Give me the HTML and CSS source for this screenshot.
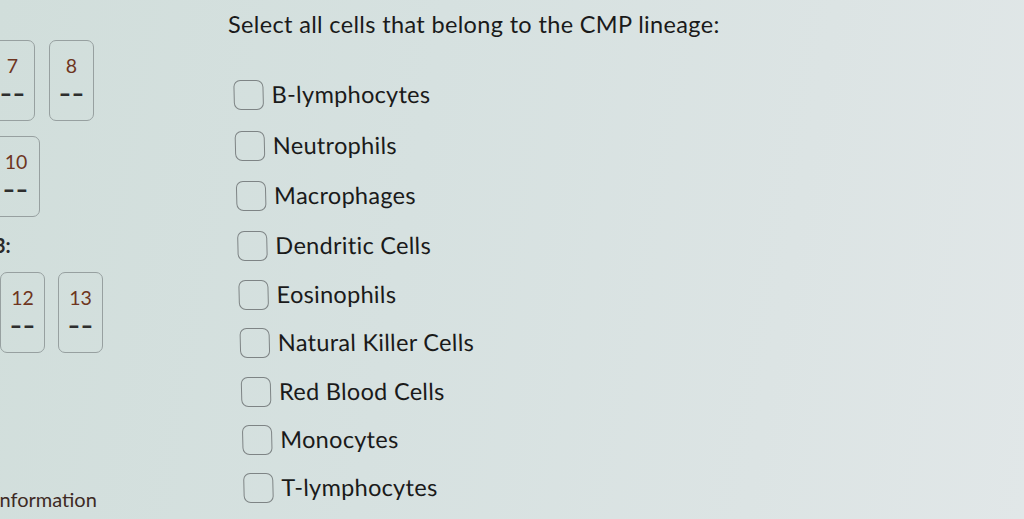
FILE: index.html
```html
<!DOCTYPE html>
<html>
<head>
<meta charset="utf-8">
<link rel="stylesheet" href="styles.css">
</head>
<body>
<div class="page">
  <aside class="side">
    <div class="cards row1">
      <div class="card"><span class="num">7</span><span class="dash">--</span></div>
      <div class="card"><span class="num">8</span><span class="dash">--</span></div>
    </div>
    <div class="cards row2">
      <div class="card wide"><span class="num">10</span><span class="dash">--</span></div>
    </div>
    <div class="label">3:</div>
    <div class="cards row3">
      <div class="card"><span class="num">12</span><span class="dash">--</span></div>
      <div class="card"><span class="num">13</span><span class="dash">--</span></div>
    </div>
    <div class="info">Information</div>
  </aside>
  <main class="main">
    <h1 class="title">Select all cells that belong to the CMP lineage:</h1>
    <ul class="options">
      <li class="opt"><span class="box"></span><span class="txt">B-lymphocytes</span></li>
      <li class="opt"><span class="box"></span><span class="txt">Neutrophils</span></li>
      <li class="opt"><span class="box"></span><span class="txt">Macrophages</span></li>
      <li class="opt"><span class="box"></span><span class="txt">Dendritic Cells</span></li>
      <li class="opt"><span class="box"></span><span class="txt">Eosinophils</span></li>
      <li class="opt"><span class="box"></span><span class="txt">Natural Killer Cells</span></li>
      <li class="opt"><span class="box"></span><span class="txt">Red Blood Cells</span></li>
      <li class="opt"><span class="box"></span><span class="txt">Monocytes</span></li>
      <li class="opt"><span class="box"></span><span class="txt">T-lymphocytes</span></li>
    </ul>
  </main>
</div>
</body>
</html>
```

FILE: styles.css
```css
html, body {
  margin: 0;
  padding: 0;
  height: 100%;
  overflow: hidden;
}
body {
  font-family: Lato, "Open Sans", sans-serif;
  background: linear-gradient(100deg, #d1dedb 0%, #d6e1e0 40%, #dce4e4 75%, #e1e7e8 100%);
  color: #1c1c1c;
}
.page {
  display: flex;
  width: 1024px;
  height: 519px;
}
.side {
  width: 228px;
  flex: none;
  display: flex;
  flex-direction: column;
  overflow: hidden;
}
.cards {
  display: flex;
}
.row1 {
  margin-top: 40px;
  margin-left: -10px;
  gap: 14px;
}
.row2 {
  margin-top: 15px;
  margin-left: -8px;
}
.row3 {
  margin-top: 15px;
  margin-left: 0;
  gap: 13px;
}
.card {
  width: 45px;
  height: 81px;
  border: 1px solid #97a0a0;
  border-radius: 7px;
  display: flex;
  flex-direction: column;
  align-items: center;
  box-sizing: border-box;
  padding-top: 13px;
}
.card.wide {
  width: 48px;
}
.num {
  font-size: 19.5px;
  line-height: 24px;
  color: #6e3520;
}
.dash {
  display: inline-block;
  margin-top: 4px;
  font-size: 22px;
  font-weight: 900;
  line-height: 24px;
  color: #2e2e2e;
  letter-spacing: 0.5px;
  transform: scaleX(1.5);
}
.label {
  margin-top: 16px;
  margin-left: -6px;
  font-size: 20px;
  line-height: 24px;
  font-weight: 700;
  color: #2a2a2a;
}
.info {
  margin-top: auto;
  margin-bottom: 8px;
  margin-left: -6px;
  font-size: 20px;
  line-height: 24px;
  color: #3e2a24;
}
.main {
  flex: 1;
  display: flex;
  flex-direction: column;
}
.title {
  margin: 10px 0 0 0;
  font-size: 23.5px;
  line-height: 29px;
  font-weight: 400;
  letter-spacing: 0.35px;
  color: #1a1a1a;
}
.options {
  list-style: none;
  margin: 30px 0 0 5px;
  padding: 0;
  display: flex;
  flex-direction: column;
  transform: skewX(1.43deg);
  transform-origin: top left;
}
.opt {
  height: 48px;
  display: flex;
  align-items: center;
  gap: 8px;
}
.opt:nth-child(-n+6) { height: 48.5px; }
.opt:nth-child(-n+5) { height: 49px; }
.opt:nth-child(-n+3) { height: 50px; }
.opt:nth-child(-n+2) { height: 51px; }
.box {
  width: 30px;
  height: 30px;
  box-sizing: border-box;
  border: 1.5px solid #7e8485;
  border-radius: 7px;
  flex: none;
}
.txt {
  font-size: 23.5px;
  line-height: 28px;
  letter-spacing: 0.3px;
  color: #1a1a1a;
  margin-top: -2px;
}
```
